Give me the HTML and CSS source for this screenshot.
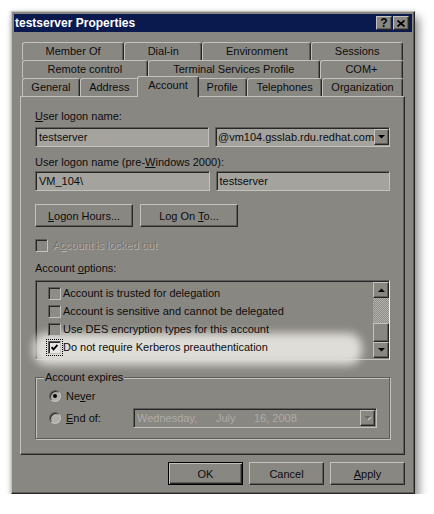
FILE: index.html
```html
<!DOCTYPE html>
<html lang="en">
<head>
    <meta charset="UTF-8">
    <meta name="viewport" content="width=device-width, initial-scale=1.0">
    <title>testserver Properties</title>
    <link rel="stylesheet" href="styles.css">
</head>
<body>
    <div class="window">
        <!-- Caption -->
        <div class="titlebar">
            <span class="title">testserver Properties</span>
            <div class="caption-buttons">
                <span class="cap-btn">?</span>
                <span class="cap-btn">
                    <svg width="8" height="7" viewBox="0 0 8 7"><path d="M0.5 0.5 L7.5 6.5 M7.5 0.5 L0.5 6.5" stroke="#000" stroke-width="1.7"/></svg>
                </span>
            </div>
        </div>

        <div class="dialog">
            <!-- Tab strip, three rows -->
            <div class="tabs">
                <div class="tab-row">
                    <div class="tab">Member Of</div>
                    <div class="tab">Dial-in</div>
                    <div class="tab">Environment</div>
                    <div class="tab">Sessions</div>
                </div>
                <div class="tab-row">
                    <div class="tab">Remote control</div>
                    <div class="tab">Terminal Services Profile</div>
                    <div class="tab">COM+</div>
                </div>
                <div class="tab-row">
                    <div class="tab">General</div>
                    <div class="tab">Address</div>
                    <div class="tab active">Account</div>
                    <div class="tab">Profile</div>
                    <div class="tab">Telephones</div>
                    <div class="tab">Organization</div>
                </div>
            </div>

            <!-- Account page -->
            <div class="panel">
                <div class="label first"><u>U</u>ser logon name:</div>
                <div class="field-row">
                    <div class="field">testserver</div>
                    <div class="field combo">
                        <span>@vm104.gsslab.rdu.redhat.com</span>
                        <span class="drop-btn">
                            <svg width="7" height="4" viewBox="0 0 7 4"><path d="M0 0 H7 L3.5 3.5 Z" fill="#000"/></svg>
                        </span>
                    </div>
                </div>

                <div class="label second">User logon name (pre-<u>W</u>indows 2000):</div>
                <div class="field-row tight">
                    <div class="field">VM_104\</div>
                    <div class="field">testserver</div>
                </div>

                <div class="button-row">
                    <button class="btn wide"><u>L</u>ogon Hours...</button>
                    <button class="btn wide">Log On <u>T</u>o...</button>
                </div>

                <div class="check-line disabled">
                    <span class="check plain"></span>A<u>c</u>count is locked out
                </div>

                <div class="label options-label">Account <u>o</u>ptions:</div>
                <div class="listbox">
                    <div class="glow"></div>
                    <ul class="options">
                        <li><span class="check"></span>Account is trusted for delegation</li>
                        <li><span class="check"></span>Account is sensitive and cannot be delegated</li>
                        <li><span class="check"></span>Use DES encryption types for this account</li>
                        <li>
                            <span class="check checked focus">
                                <svg width="7" height="7" viewBox="0 0 7 7"><path d="M0.6 3.2 L2.6 5.3 L6.5 1" stroke="#000" stroke-width="1.9" fill="none"/></svg>
                            </span>Do not require Kerberos preauthentication
                        </li>
                    </ul>
                    <div class="scrollbar">
                        <span class="sb-btn">
                            <svg width="7" height="4" viewBox="0 0 7 4"><path d="M0 4 L3.5 0.5 L7 4 Z" fill="#000"/></svg>
                        </span>
                        <span class="sb-track"></span>
                        <span class="sb-thumb"></span>
                        <span class="sb-btn">
                            <svg width="7" height="4" viewBox="0 0 7 4"><path d="M0 0 H7 L3.5 3.5 Z" fill="#000"/></svg>
                        </span>
                    </div>
                </div>

                <fieldset class="expires">
                    <legend>Account expires</legend>
                    <div class="radio-line"><span class="radio on"></span>Ne<u>v</u>er</div>
                    <div class="radio-line date-line">
                        <span class="radio"></span><u>E</u>nd of:
                        <div class="date">
                            <span class="date-day">Wednesday,</span>
                            <span class="date-month">July</span>
                            <span>16, 2008</span>
                            <span class="date-btn">
                                <svg width="8" height="5" viewBox="0 0 8 5"><path d="M1 1 H8 L4.5 4.5 Z" fill="#c4c2bd"/><path d="M0 0 H7 L3.5 3.5 Z" fill="#6a6965"/></svg>
                            </span>
                        </div>
                    </div>
                </fieldset>
            </div>

            <div class="dialog-buttons">
                <button class="btn default">OK</button>
                <button class="btn">Cancel</button>
                <button class="btn"><u>A</u>pply</button>
            </div>
        </div>
    </div>
</body>
</html>
```

FILE: styles.css
```css
body {
    margin: 0;
    background: #fff;
    font-family: "Liberation Sans", Arial, sans-serif;
    font-size: 11px;
    color: #0d0d0d;
}

u {
    text-decoration-thickness: 1px;
    text-underline-offset: 1px;
}

.window {
    box-sizing: border-box;
    width: 404px;
    height: 483px;
    margin: 11px 0 0 11px;
    padding: 2px;
    background: #898782;
    border: 1px solid;
    border-color: #c4c2bd #262626 #262626 #c4c2bd;
    box-shadow: inset -1px -1px 0 #5e5d59, 4px 6px 9px rgba(0, 0, 0, 0.45), -1px 0 3px rgba(0, 0, 0, 0.15);
}

.titlebar {
    height: 18px;
    background: #0b1a4e;
    display: flex;
    align-items: center;
    justify-content: space-between;
    padding: 0 3px 0 1px;
}

.title {
    color: #fff;
    font-weight: bold;
    font-size: 12px;
}

.caption-buttons {
    display: flex;
    gap: 1px;
}

.cap-btn {
    box-sizing: border-box;
    width: 16px;
    height: 14px;
    display: flex;
    align-items: center;
    justify-content: center;
    background: #898782;
    border: 1px solid;
    border-color: #c4c2bd #262626 #262626 #c4c2bd;
    box-shadow: inset -1px -1px 0 #5e5d59;
    font-weight: bold;
    font-size: 12px;
    color: #000;
}

.dialog {
    margin: 10px 0 0 6px;
    width: 385px;
}

/* tabs */
.tabs {
    padding: 0 2px;
}

.tab-row {
    display: flex;
    height: 18px;
}

.tab {
    flex: 1 1 auto;
    box-sizing: border-box;
    height: 18px;
    line-height: 17px;
    text-align: center;
    white-space: nowrap;
    border-top: 1px solid #c4c2bd;
    border-left: 1px solid #c4c2bd;
    border-right: 1px solid #262626;
    border-radius: 3px 3px 0 0;
    box-shadow: inset -1px 0 0 #5e5d59;
}

.tab.active {
    position: relative;
    z-index: 1;
    height: 21px;
    margin: -2px -2px -1px;
    padding: 0 2px;
    line-height: 16px;
    background: #898782;
}

/* page */
.panel {
    box-sizing: border-box;
    height: 359px;
    padding: 0 14px;
    border: 1px solid;
    border-color: #c4c2bd #262626 #262626 #c4c2bd;
    box-shadow: inset -1px -1px 0 #5e5d59;
}

.label {
    line-height: 14px;
}

.label.first {
    margin-top: 12px;
}

.label.second {
    margin-top: 8px;
}

.label.options-label {
    margin-top: 9px;
}

.field-row {
    display: flex;
    gap: 6px;
    margin-top: 4px;
}

.field-row.tight {
    margin-top: 2px;
}

.field {
    box-sizing: border-box;
    width: 175px;
    height: 20px;
    padding: 0 3px;
    line-height: 18px;
    background: #a5a39e;
    border: 1px solid;
    border-color: #5e5d59 #c4c2bd #c4c2bd #5e5d59;
    box-shadow: inset 1px 1px 0 #262626;
    white-space: nowrap;
}

.combo {
    display: flex;
    align-items: center;
    justify-content: space-between;
    padding: 0 0 0 2px;
}

.drop-btn {
    box-sizing: border-box;
    width: 16px;
    height: 16px;
    display: flex;
    align-items: center;
    justify-content: center;
    background: #898782;
    border: 1px solid;
    border-color: #c4c2bd #262626 #262626 #c4c2bd;
    box-shadow: inset -1px -1px 0 #5e5d59;
}

.button-row {
    display: flex;
    gap: 7px;
    margin-top: 13px;
}

.btn {
    box-sizing: border-box;
    width: 75px;
    height: 23px;
    padding: 0;
    font: inherit;
    color: inherit;
    background: #898782;
    border: 1px solid;
    border-color: #c4c2bd #262626 #262626 #c4c2bd;
    box-shadow: inset -1px -1px 0 #5e5d59;
}

.btn.wide {
    width: 98px;
}

.btn.default {
    border-color: #000;
    box-shadow: inset 1px 1px 0 #c4c2bd, inset -1px -1px 0 #262626, inset -2px -2px 0 #5e5d59;
}

/* check boxes */
.check-line {
    display: flex;
    align-items: center;
    height: 14px;
    margin-top: 11px;
}

.disabled {
    color: #74726e;
    text-shadow: 1px 1px 0 #b7b5b0;
}

.check {
    box-sizing: border-box;
    width: 13px;
    height: 13px;
    flex: none;
    display: flex;
    align-items: center;
    justify-content: center;
    margin-right: 2px;
    background: #8e8c87;
    border: 1px solid;
    border-color: #5e5d59 #c4c2bd #c4c2bd #5e5d59;
    box-shadow: inset 1px 1px 0 #262626;
}

.check.plain {
    margin-right: 5px;
    background: #898782;
}

.check.checked {
    background: #e9e7e2;
}

.check.focus {
    outline: 1px dotted #000;
    outline-offset: 1px;
}

/* account options list */
.listbox {
    position: relative;
    z-index: 0;
    display: flex;
    box-sizing: border-box;
    height: 80px;
    margin-top: 5px;
    border: 1px solid;
    border-color: #5e5d59 #f2f0eb #c4c2bd #5e5d59;
    box-shadow: inset 1px 1px 0 #262626;
}

.glow {
    position: absolute;
    z-index: -1;
    left: -3px;
    top: 52px;
    width: 329px;
    height: 32px;
    background: #dfddd8;
    border-radius: 14px;
    filter: blur(4px);
}

.options {
    flex: 1;
    list-style: none;
    margin: 0;
    padding: 3px 0 0 12px;
}

.options li {
    display: flex;
    align-items: center;
    height: 18px;
}

.scrollbar {
    display: flex;
    flex-direction: column;
    width: 16px;
    margin: 1px 0;
}

.sb-btn,
.sb-thumb {
    box-sizing: border-box;
    display: flex;
    align-items: center;
    justify-content: center;
    background: #898782;
    border: 1px solid;
    border-color: #c4c2bd #262626 #262626 #c4c2bd;
    box-shadow: inset -1px -1px 0 #5e5d59;
}

.sb-btn {
    height: 16px;
}

.sb-thumb {
    height: 19px;
}

.sb-track {
    flex: 1;
    background: repeating-conic-gradient(#b3b1ac 0 25%, #8f8d88 0 50%) 0 0 / 2px 2px;
}

/* account expires group */
.expires {
    margin: 10px 0 0;
    padding: 0 12px 10px 8px;
    min-width: 0;
    border: 1px solid #5e5d59;
    box-shadow: inset 1px 1px 0 #c4c2bd, 1px 1px 0 #c4c2bd;
}

.expires legend {
    padding: 0 1px;
    line-height: 14px;
    background: #898782;
}

.radio-line {
    display: flex;
    align-items: center;
    height: 14px;
    margin-top: 5px;
    padding-left: 5px;
}

.radio-line.date-line {
    height: 20px;
}

.radio {
    position: relative;
    box-sizing: border-box;
    width: 12px;
    height: 12px;
    margin-right: 5px;
    border-radius: 50%;
    background: #b1afaa;
    border: 1px solid;
    border-color: #5e5d59 #c4c2bd #c4c2bd #5e5d59;
    box-shadow: inset 1px 1px 0 #262626;
}

.radio.on::after {
    content: "";
    position: absolute;
    left: 3px;
    top: 3px;
    width: 4px;
    height: 4px;
    border-radius: 50%;
    background: #000;
}

.date {
    box-sizing: border-box;
    display: flex;
    align-items: center;
    width: 244px;
    height: 20px;
    margin-left: auto;
    padding: 0 1px 0 3px;
    color: #aeaca7;
    border: 1px solid;
    border-color: #5e5d59 #c4c2bd #c4c2bd #5e5d59;
    box-shadow: inset 1px 1px 0 #262626;
}

.date-day {
    width: 79px;
}

.date-month {
    width: 38px;
}

.date-btn {
    box-sizing: border-box;
    width: 15px;
    height: 16px;
    margin-left: auto;
    display: flex;
    align-items: center;
    justify-content: center;
    border: 1px solid;
    border-color: #c4c2bd #262626 #262626 #c4c2bd;
    box-shadow: inset -1px -1px 0 #5e5d59;
}

.dialog-buttons {
    display: flex;
    justify-content: flex-end;
    gap: 6px;
    margin-top: 7px;
}
```
